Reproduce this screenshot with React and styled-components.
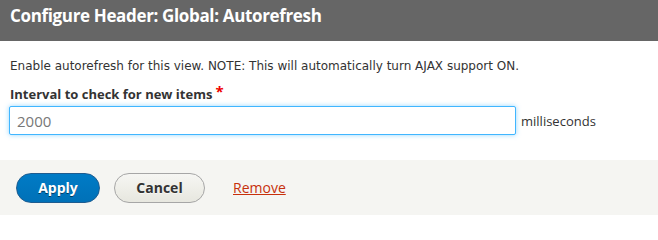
import React from 'react';
import styled, { createGlobalStyle } from 'styled-components';

const Global = createGlobalStyle`
  html, body {
    margin: 0;
    padding: 0;
    background: #fff;
  }
  body {
    font-family: "Open Sans", "DejaVu Sans", sans-serif;
    color: #333;
  }
`;

const Dialog = styled.div`
  width: 658px;
  height: 215px;
  display: flex;
  flex-direction: column;
  background: #fff;
  overflow: hidden;
`;

const TitleBar = styled.div`
  height: 41px;
  background: #666;
  display: flex;
  align-items: center;
  padding: 0 10px;
  box-sizing: border-box;
`;

const Title = styled.h1`
  margin: -11px 0 0 0;
  font-size: 17px;
  font-weight: 700;
  color: #fff;
  letter-spacing: -0.35px;
`;

const Body = styled.div`
  flex: 1;
  padding: 18px 9px 0 9px;
  display: flex;
  flex-direction: column;
`;

const Description = styled.p`
  margin: 0 0 0 1px;
  font-family: "DejaVu Sans", sans-serif;
  font-size: 12px;
  color: #333;
`;

const Label = styled.label`
  display: block;
  margin: 8px 0 3px 1px;
  font-size: 13px;
  font-weight: 700;
  color: #333;
`;

const Required = styled.span`
  color: #e00;
  margin-left: 3px;
  font-size: 15px;
  vertical-align: 2px;
`;

const FieldRow = styled.div`
  display: flex;
  align-items: center;
  gap: 5px;
`;

const TextInput = styled.input`
  width: 507px;
  height: 29px;
  box-sizing: border-box;
  border: 1px solid #40b6ff;
  border-radius: 2px;
  box-shadow: 0 0 5px rgba(64, 182, 255, 0.55);
  padding: 0 7px;
  font-family: inherit;
  font-size: 15px;
  color: #777;
  outline: none;
`;

const Suffix = styled.span`
  font-size: 13px;
  color: #333;
`;

const Footer = styled.div`
  height: 55px;
  background: #f5f5f2;
  display: flex;
  align-items: center;
  padding: 0 16px;
  box-sizing: border-box;
  gap: 14px;
`;

const Button = styled.button`
  height: 30px;
  padding: 0;
  border-radius: 20px;
  font-family: inherit;
  font-size: 14px;
  font-weight: 700;
  cursor: pointer;
  box-sizing: border-box;
  border: 1px solid ${p => (p.$primary ? '#1e5c90' : '#a6a6a6')};
  color: ${p => (p.$primary ? '#fff' : '#333')};
  background: ${p =>
    p.$primary
      ? 'linear-gradient(#007bc6, #0071b8)'
      : 'linear-gradient(#f6f6f3, #e7e7df)'};
  text-shadow: ${p => (p.$primary ? '0 1px rgba(0,0,0,0.5)' : '0 1px hsla(0,0%,100%,0.6)')};
  width: ${p => p.$w}px;
`;

const RemoveLink = styled.a`
  margin-left: 14px;
  font-size: 14px;
  color: #c7300c;
  text-decoration: underline;
  cursor: pointer;
`;

export default function App() {
  return (
    <>
      <Global />
      <Dialog>
        <TitleBar>
          <Title>Configure Header: Global: Autorefresh</Title>
        </TitleBar>
        <Body>
          <Description>
            Enable autorefresh for this view. NOTE: This will automatically turn AJAX support ON.
          </Description>
          <Label htmlFor="interval">
            Interval to check for new items<Required>*</Required>
          </Label>
          <FieldRow>
            <TextInput id="interval" defaultValue="2000" />
            <Suffix>milliseconds</Suffix>
          </FieldRow>
        </Body>
        <Footer>
          <Button $primary $w={84}>Apply</Button>
          <Button $w={91}>Cancel</Button>
          <RemoveLink>Remove</RemoveLink>
        </Footer>
      </Dialog>
    </>
  );
}
